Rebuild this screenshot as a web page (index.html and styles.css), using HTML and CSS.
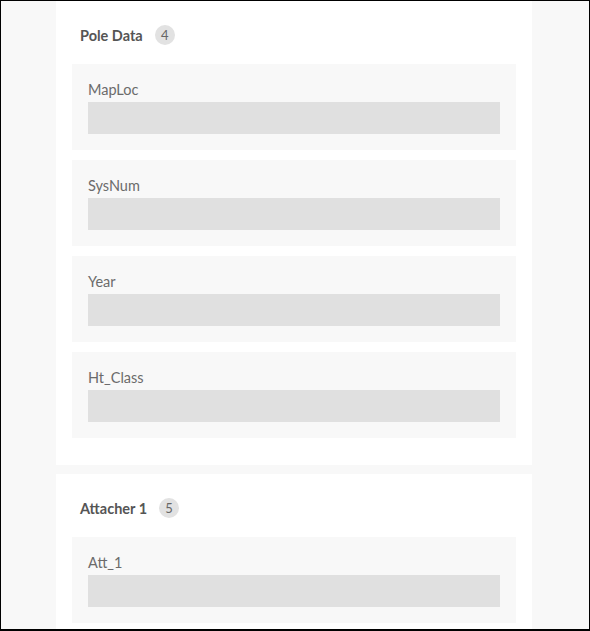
FILE: index.html
```html
<!DOCTYPE html>
<html>

<head>
  <meta charset="UTF-8" />
  <title>Pole Data</title>
  <link rel="stylesheet" href="styles.css">
</head>

<body>
  <div class="frame">
    <div class="column">
      <div class="card">
        <div class="card-header">
          <span class="card-title">Pole Data</span>
          <span class="badge">4</span>
        </div>
        <div class="field">
          <div class="field-label">MapLoc</div>
          <div class="field-input"></div>
        </div>
        <div class="field">
          <div class="field-label">SysNum</div>
          <div class="field-input"></div>
        </div>
        <div class="field">
          <div class="field-label">Year</div>
          <div class="field-input"></div>
        </div>
        <div class="field">
          <div class="field-label">Ht_Class</div>
          <div class="field-input"></div>
        </div>
      </div>
      <div class="card">
        <div class="card-header">
          <span class="card-title">Attacher 1</span>
          <span class="badge">5</span>
        </div>
        <div class="field">
          <div class="field-label">Att_1</div>
          <div class="field-input"></div>
        </div>
      </div>
    </div>
  </div>
</body>

</html>
```

FILE: styles.css
```css
html,
body {
  margin: 0;
  padding: 0;
}

body {
  font-family: Lato, "Open Sans", sans-serif;
  color: #4c4c4c;
}

.frame {
  box-sizing: border-box;
  width: 590px;
  height: 631px;
  border: 1px solid #000;
  border-bottom-width: 2px;
  background: #f8f8f8;
  overflow: hidden;
}

.column {
  width: 476px;
  margin-left: 55px;
}

.card {
  background: #fff;
  padding: 24px 16px 27px;
  margin-bottom: 9px;
}

.card-header {
  display: flex;
  align-items: center;
  height: 20px;
  padding-left: 8px;
  margin-bottom: 19px;
}

.card-title {
  font-size: 14.5px;
  font-weight: bold;
  color: #555;
}

.badge {
  display: inline-flex;
  align-items: center;
  justify-content: center;
  width: 20px;
  height: 20px;
  margin-left: 12px;
  border-radius: 50%;
  background: #e2e2e2;
  color: #666;
  font-size: 13px;
}

.field {
  background: #f8f8f8;
  padding: 16px 16px 16px;
  margin-bottom: 10px;
}

.field:last-child {
  margin-bottom: 0;
}

.field-label {
  font-size: 14.5px;
  line-height: 20px;
  color: #6b6b6b;
  margin-bottom: 2px;
}

.field-input {
  height: 32px;
  background: #e0e0e0;
}
```
